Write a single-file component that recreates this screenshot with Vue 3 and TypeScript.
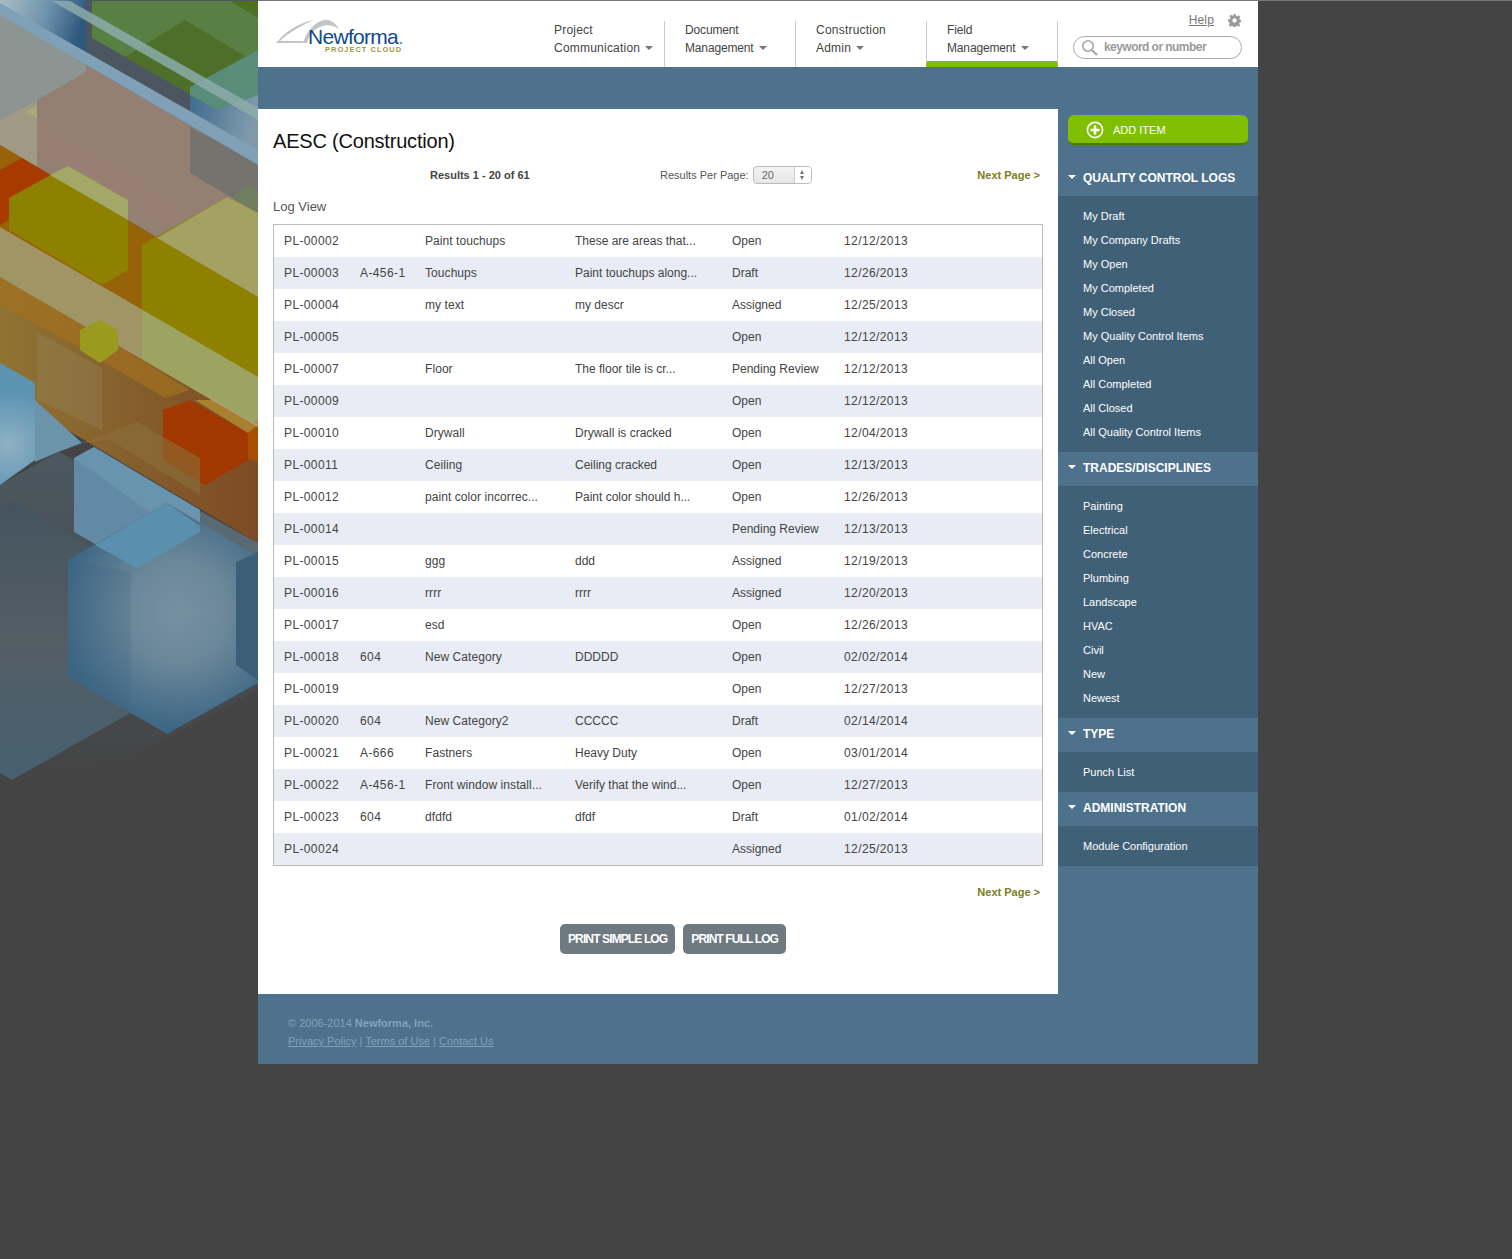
<template>
  <div class="page">
    <aside class="art">
      <svg width="258" height="800" viewBox="0 0 258 800">
        <defs>
          <linearGradient id="gBlueTop" x1="0" y1="0" x2="1" y2="0.2">
            <stop offset="0" stop-color="#a9bcc6" />
            <stop offset="0.55" stop-color="#6f94ad" />
            <stop offset="1" stop-color="#2f5a7e" />
          </linearGradient>
          <linearGradient id="gBlueRight" x1="0" y1="0" x2="1" y2="0.4">
            <stop offset="0" stop-color="#356488" />
            <stop offset="1" stop-color="#7f99ab" />
          </linearGradient>
          <linearGradient id="gDark" x1="0" y1="0" x2="0" y2="1">
            <stop offset="0" stop-color="#4b5860" />
            <stop offset="1" stop-color="#444444" />
          </linearGradient>
          <linearGradient id="gDarkHex" x1="0" y1="0" x2="0" y2="1">
            <stop offset="0" stop-color="#44545e" />
            <stop offset="0.5" stop-color="#535e65" />
            <stop offset="1" stop-color="#466070" />
          </linearGradient>
          <linearGradient id="gWarm" x1="0" y1="0" x2="1" y2="0">
            <stop offset="0" stop-color="#8f7433" />
            <stop offset="1" stop-color="#7d4a25" />
          </linearGradient>
          <radialGradient id="gCube" gradientUnits="userSpaceOnUse" cx="178" cy="612" r="118">
            <stop offset="0" stop-color="#76909f" />
            <stop offset="0.45" stop-color="#6a8799" />
            <stop offset="1" stop-color="#3c6684" />
          </radialGradient>
          <radialGradient id="gCorner" gradientUnits="userSpaceOnUse" cx="8" cy="445" r="55">
            <stop offset="0" stop-color="#8fb0c2" />
            <stop offset="1" stop-color="#5b93b3" />
          </radialGradient>
        </defs>

        <!-- top -->
        <polygon points="0,0 258,0 258,190 0,40" fill="#4b5661" />
        <polygon points="0,0 86,0 86,56 0,6" fill="url(#gBlueTop)" />
        <polygon points="92,1 258,1 258,50 218,110 92,38" fill="#5a7f45" />
        <polygon points="125,57 185,20 243,55 258,62 258,70 218,110" fill="#4d6f2a" />
        <polygon points="230,1 258,1 258,18" fill="#4e7025" />

        <!-- pink band -->
        <polygon points="0,15 258,165 258,297 0,145" fill="#948073" />
        <polygon points="0,13 86,65 86,72 37,100 0,120" fill="#8c9592" />
        <polygon points="0,120 37,100 37,167 0,145" fill="#a09a85" />
        <polygon points="25,112 37,105 37,118" fill="#a3ab7a" />
        <polygon points="37,120 190,210 170,225 37,150" fill="#9a7f74" opacity="0.6" />
        <polygon points="190,93 258,55 258,160 190,125" fill="url(#gBlueRight)" />
        <polygon points="190,127 258,163 258,213 190,173" fill="#75736e" />
        <polygon points="233,197 248,185 258,190 258,213" fill="#6f7f60" />
        <polygon points="190,87 258,50 258,95 218,110 190,95" fill="#5a8c7a" />
        <polygon points="0,3 0,15 258,165 258,150" fill="#7fa0b6" />
        <polygon points="52,1 70,1 258,108 258,120" fill="#8cabaa" opacity="0.85" />

        <!-- orange band -->
        <polygon points="0,145 258,297 258,440 0,290" fill="#96620a" />
        <polygon points="0,170 22,158 50,175 9,198 9,220 0,225" fill="#a83a00" />
        <polygon points="9,198 68,166 128,200 128,270 102,285 9,230" fill="#8e8000" />
        <polygon points="50,175 68,166 128,200 128,220" fill="#a3a868" />
        <polygon points="142,245 227,197 258,213 258,425 142,365" fill="#8e8000" />
        <polygon points="157,238 227,197 258,213 258,297" fill="#a3a262" />

        <!-- warm band below the stripe -->
        <polygon points="0,277 258,427 258,543 0,390" fill="url(#gWarm)" />
        <polygon points="0,277 102,336 190,390 165,398 75,345 0,305" fill="#a3701f" opacity="0.7" />
        <polygon points="37,332 102,368 102,430 37,400" fill="#94825a" opacity="0.4" />
        <polygon points="163,410 190,400 248,433 248,460 205,485 163,460" fill="#a03800" />
        <polygon points="248,425 258,420 258,462 248,458" fill="#a85000" />
        <polygon points="195,400 215,400 258,425 248,433" fill="#a88030" />
        <polygon points="82,443 137,422 200,458 200,495 110,440" fill="#8a7038" opacity="0.6" />

        <!-- light stripe -->
        <polygon points="0,227 258,377 258,427 0,277" fill="#a9c0b0" opacity="0.55" />
        <polygon points="80,330 100,320 118,330 118,350 100,363 80,350" fill="#9a9a20" />

        <!-- lower dark part -->
        <polygon points="0,485 58,452 258,543 258,690 130,760 0,780" fill="url(#gDark)" />
        <polygon points="200,511 258,543 258,557 200,525" fill="#5a6a72" />
        <polygon points="0,506 14,502 130,570 130,713 12,780 0,773" fill="url(#gDarkHex)" />
        <polygon points="0,363 35,383 35,460 0,485" fill="url(#gCorner)" />
        <polygon points="35,400 82,443 58,452 35,462" fill="#6b93aa" />
        <polygon points="74,458 94,447 200,510 200,532 137,568 74,532" fill="#6289a5" />
        <polygon points="74,458 94,447 200,510 200,530 186,538" fill="#6b98b2" opacity="0.7" />
        <polygon points="167,503 258,557 258,683 167,734 68,677 68,560" fill="url(#gCube)" />
        <polygon points="68,560 131,572 131,713 68,677" fill="#3c6684" opacity="0.2" />
        <polygon points="95,545 167,503 200,526 200,532 137,568" fill="#5b8fae" />
        <polygon points="236,562 258,552 258,680 236,665" fill="#3c5f78" />
      </svg>
    </aside>

    <div class="shell">
      <header class="topbar">
        <div class="logo">
          <svg class="arch" width="70" height="26" viewBox="0 0 70 26">
            <path d="M0 24 C10 12 22 4 38 1 C26 6 12 14 4 22 H27 V24 Z" fill="#c3c5c5" />
            <path d="M27 24 C30 14 38 3 48 1 C55 0 60 5 63 10 C57 6 50 5 44 8 C37 11 33 17 31 24 Z" fill="#c3c5c5" />
          </svg>
          <div class="logo-name">Newforma<i>.</i></div>
          <div class="logo-sub">PROJECT CLOUD</div>
        </div>
        <nav class="nav">
          <a v-for="item in navItems" :key="item.line1" :class="['nav-item', { active: item.active }]">
            {{ item.line1 }}<br />{{ item.line2 }}<span class="caret"></span>
          </a>
        </nav>
        <div class="tools">
          <div class="tools-top">
            <a class="help">Help</a>
            <svg width="13" height="13" viewBox="0 0 24 24">
              <path fill="#9b9b9b" fill-rule="evenodd" d="M10 0h4l.7 3.4 2.3 1 2.9-1.9 2.8 2.8-1.9 2.9 1 2.3 3.2.5v4l-3.4.7-1 2.3 1.9 2.9-2.8 2.8-2.9-1.9-2.3 1-.5 3.2h-4l-.7-3.4-2.3-1-2.9 1.9-2.8-2.8 1.9-2.9-1-2.3L0 14v-4l3.4-.7 1-2.3-1.9-2.9 2.8-2.8 2.9 1.9 2.3-1zM12 8a4 4 0 1 0 0 8 4 4 0 0 0 0-8z" />
            </svg>
          </div>
          <div class="search">
            <svg width="17" height="17" viewBox="0 0 17 17">
              <circle cx="7" cy="7" r="5.2" fill="none" stroke="#a5a5a5" stroke-width="1.6" />
              <path d="M11 11l5 5" stroke="#a5a5a5" stroke-width="2.2" />
            </svg>
            <span>keyword or number</span>
          </div>
        </div>
      </header>
      <div class="band"></div>

      <div class="body">
        <main class="main">
          <h1>AESC (Construction)</h1>
          <div class="results">
            <b class="count">Results 1 - 20 of 61</b>
            <span class="per-page">Results Per Page:</span>
            <div class="select">
              <span>20</span>
              <i class="arrows"></i>
            </div>
            <a class="next">Next Page &gt;</a>
          </div>
          <div class="log-view">Log View</div>
          <table class="log">
            <tbody>
              <tr v-for="row in rows" :key="row[0]">
                <td v-for="(cell, i) in row" :key="i">{{ cell }}</td>
                <td></td>
              </tr>
            </tbody>
          </table>
          <div class="next-row"><a class="next">Next Page &gt;</a></div>
          <div class="print">
            <button type="button">PRINT SIMPLE LOG</button>
            <button type="button">PRINT FULL LOG</button>
          </div>
        </main>

        <aside class="side">
          <div class="add-wrap">
            <a class="add">
              <svg width="18" height="18" viewBox="0 0 18 18">
                <circle cx="9" cy="9" r="7.6" fill="none" stroke="#fff" stroke-width="1.6" />
                <path d="M9 4.5v9M4.5 9h9" stroke="#fff" stroke-width="2.6" />
              </svg>
              ADD ITEM
            </a>
          </div>
          <section v-for="(group, idx) in groups" :key="group.title">
            <h3 :class="{ first: idx === 0 }"><span class="tri"></span>{{ group.title }}</h3>
            <ul>
              <li v-for="link in group.links" :key="link">{{ link }}</li>
            </ul>
          </section>
        </aside>
      </div>

      <footer class="footer">
        <div>© 2006-2014 <b>Newforma, Inc.</b></div>
        <div class="links"><a>Privacy Policy</a> | <a>Terms of Use</a> | <a>Contact Us</a></div>
      </footer>
    </div>
  </div>
</template>

<script setup lang="ts">
const navItems = [
  { line1: 'Project', line2: 'Communication', active: false },
  { line1: 'Document', line2: 'Management', active: false },
  { line1: 'Construction', line2: 'Admin', active: false },
  { line1: 'Field', line2: 'Management', active: true }
]

const rows: string[][] = [
  ['PL-00002', '', 'Paint touchups', 'These are areas that...', 'Open', '12/12/2013'],
  ['PL-00003', 'A-456-1', 'Touchups', 'Paint touchups along...', 'Draft', '12/26/2013'],
  ['PL-00004', '', 'my text', 'my descr', 'Assigned', '12/25/2013'],
  ['PL-00005', '', '', '', 'Open', '12/12/2013'],
  ['PL-00007', '', 'Floor', 'The floor tile is cr...', 'Pending Review', '12/12/2013'],
  ['PL-00009', '', '', '', 'Open', '12/12/2013'],
  ['PL-00010', '', 'Drywall', 'Drywall is cracked', 'Open', '12/04/2013'],
  ['PL-00011', '', 'Ceiling', 'Ceiling cracked', 'Open', '12/13/2013'],
  ['PL-00012', '', 'paint color incorrec...', 'Paint color should h...', 'Open', '12/26/2013'],
  ['PL-00014', '', '', '', 'Pending Review', '12/13/2013'],
  ['PL-00015', '', 'ggg', 'ddd', 'Assigned', '12/19/2013'],
  ['PL-00016', '', 'rrrr', 'rrrr', 'Assigned', '12/20/2013'],
  ['PL-00017', '', 'esd', '', 'Open', '12/26/2013'],
  ['PL-00018', '604', 'New Category', 'DDDDD', 'Open', '02/02/2014'],
  ['PL-00019', '', '', '', 'Open', '12/27/2013'],
  ['PL-00020', '604', 'New Category2', 'CCCCC', 'Draft', '02/14/2014'],
  ['PL-00021', 'A-666', 'Fastners', 'Heavy Duty', 'Open', '03/01/2014'],
  ['PL-00022', 'A-456-1', 'Front window install...', 'Verify that the wind...', 'Open', '12/27/2013'],
  ['PL-00023', '604', 'dfdfd', 'dfdf', 'Draft', '01/02/2014'],
  ['PL-00024', '', '', '', 'Assigned', '12/25/2013']
]

const groups = [
  {
    title: 'QUALITY CONTROL LOGS',
    links: ['My Draft', 'My Company Drafts', 'My Open', 'My Completed', 'My Closed', 'My Quality Control Items', 'All Open', 'All Completed', 'All Closed', 'All Quality Control Items']
  },
  {
    title: 'TRADES/DISCIPLINES',
    links: ['Painting', 'Electrical', 'Concrete', 'Plumbing', 'Landscape', 'HVAC', 'Civil', 'New', 'Newest']
  },
  { title: 'TYPE', links: ['Punch List'] },
  { title: 'ADMINISTRATION', links: ['Module Configuration'] }
]
</script>

<style>
html, body {
  background: #444444;
}
</style>

<style scoped>
.page {
  display: flex;
  min-height: 1259px;
  border-top: 1px solid #777;
  box-sizing: border-box;
  font-family: "Liberation Sans", Arial, sans-serif;
  font-size: 12px;
  color: #444;
}
.art {
  width: 258px;
  flex: none;
  line-height: 0;
  margin-top: -1px;
}
.shell {
  width: 1000px;
  flex: none;
}
.topbar {
  display: flex;
  height: 66px;
  background: #fff;
}
.logo {
  width: 276px;
  flex: none;
  padding: 18px 0 0 18px;
  box-sizing: border-box;
  position: relative;
}
.arch {
  display: block;
}
.logo-name {
  position: absolute;
  left: 50px;
  top: 24px;
  font-size: 21px;
  line-height: 24px;
  letter-spacing: -0.7px;
  color: #0f4a8a;
}
.logo-name i {
  font-style: normal;
  color: #4f9bc4;
}
.logo-sub {
  position: absolute;
  left: 67px;
  top: 44px;
  font-size: 7.5px;
  line-height: 9px;
  font-weight: bold;
  letter-spacing: 1px;
  color: #9a9a3d;
}
.nav {
  display: flex;
  padding-top: 20px;
}
.nav-item {
  width: 131px;
  box-sizing: border-box;
  padding: 0 0 0 20px;
  border-right: 1px solid #ccc;
  line-height: 18px;
  white-space: nowrap;
  color: #444;
}
.nav-item:nth-child(odd) {
  letter-spacing: 0.22px;
}
.nav-item:nth-child(even) {
  letter-spacing: -0.15px;
}
.nav-item.active {
  border-left: 1px solid #ccc;
  margin-left: -1px;
  width: 132px;
  border-bottom: 6px solid #7fbf00;
}
.caret {
  display: inline-block;
  margin-left: 5px;
  vertical-align: 2px;
  border-style: solid;
  border-width: 4px 4px 0;
  border-color: #777 transparent transparent;
}
.tools {
  flex: 1;
  padding: 11px 16px 0 15px;
}
.tools-top {
  display: flex;
  justify-content: flex-end;
  align-items: center;
  gap: 14px;
  height: 16px;
  padding-right: 1px;
}
.help {
  color: #777;
  text-decoration: underline;
  letter-spacing: 0.15px;
}
.search {
  display: flex;
  align-items: center;
  gap: 6px;
  height: 23px;
  margin-top: 8px;
  padding-left: 7px;
  box-sizing: border-box;
  border: 1px solid #aaa;
  border-radius: 12px;
  color: #9a9a9a;
  font-weight: bold;
  letter-spacing: -0.55px;
}
.search span {
  margin-top: -2px;
}
.band {
  height: 42px;
  background: #4f728c;
}
.body {
  display: flex;
  height: 885px;
}
.main {
  width: 800px;
  flex: none;
  background: #fff;
  padding: 0 15px;
  box-sizing: border-box;
}
h1 {
  margin: 0;
  padding-top: 20px;
  font-size: 20px;
  line-height: 24px;
  font-weight: normal;
  letter-spacing: -0.2px;
  color: #111;
}
.results {
  display: flex;
  align-items: center;
  height: 18px;
  margin-top: 13px;
  font-size: 11px;
}
.count {
  margin-left: 157px;
  width: 230px;
  color: #444;
}
.per-page {
  color: #555;
}
.select {
  display: flex;
  align-items: center;
  justify-content: space-between;
  width: 59px;
  height: 18px;
  margin-left: 4px;
  box-sizing: border-box;
  padding-left: 8px;
  border: 1px solid #bbb;
  border-radius: 4px;
  background: linear-gradient(#f4f4f4, #e6e6e6);
  color: #666;
}
.arrows {
  position: relative;
  width: 16px;
  height: 16px;
  border-left: 1px solid #ccc;
  background: #fff;
  border-radius: 0 3px 3px 0;
}
.arrows::before,
.arrows::after {
  content: "";
  position: absolute;
  left: 5px;
  border-style: solid;
  border-color: #777 transparent;
}
.arrows::before {
  top: 3px;
  border-width: 0 2.5px 4px;
}
.arrows::after {
  top: 9px;
  border-width: 4px 2.5px 0;
}
.next {
  margin-left: auto;
  margin-right: 3px;
  font-size: 11px;
  font-weight: bold;
  color: #7d7d20;
}
.log-view {
  margin-top: 15px;
  font-size: 13px;
  line-height: 16px;
  color: #555;
}
.log {
  width: 770px;
  margin-top: 9px;
  border-collapse: collapse;
  border: 1px solid #bbb;
  table-layout: fixed;
}
.log td {
  height: 32px;
  padding: 0 0 0 10px;
  white-space: nowrap;
  color: #444;
}
.log td:nth-child(1) { width: 66px; letter-spacing: 0.38px; }
.log td:nth-child(2) { width: 55px; letter-spacing: 0.4px; }
.log td:nth-child(3) { width: 140px; letter-spacing: 0.07px; }
.log td:nth-child(4) { width: 147px; }
.log td:nth-child(5) { width: 102px; }
.log td:nth-child(6) { width: 80px; letter-spacing: 0.4px; }
.log tr:nth-child(even) td {
  background: #e9ecf5;
}
.next-row {
  display: flex;
  margin-top: 19px;
  height: 14px;
  line-height: 14px;
}
.print {
  display: flex;
  gap: 8px;
  margin-top: 25px;
  padding-left: 287px;
}
.print button {
  height: 30px;
  padding: 0 8px;
  border: none;
  border-radius: 5px;
  background: #6e7a80;
  color: #fff;
  font-family: inherit;
  font-size: 12px;
  font-weight: bold;
  letter-spacing: -0.88px;
}
.side {
  flex: 1;
  background: #4f728c;
  align-self: stretch;
}
.add-wrap {
  padding: 6px 10px 0;
}
.add {
  display: flex;
  align-items: center;
  gap: 9px;
  height: 30px;
  padding: 2px 0 0 18px;
  box-sizing: border-box;
  border-radius: 6px;
  border-bottom: 2px solid #4b7a00;
  background: #7fbf00;
  color: #fff;
  font-size: 11px;
}
.side h3 {
  display: flex;
  align-items: center;
  height: 34px;
  margin: 0;
  padding: 0 0 3px 10px;
  box-sizing: border-box;
  font-size: 12px;
  color: #fff;
}
.side h3.first {
  margin-top: 15px;
  height: 36px;
  padding-bottom: 1px;
}
.tri {
  margin-right: 7px;
  margin-bottom: 2px;
  border-style: solid;
  border-width: 4px 4px 0;
  border-color: #fff transparent transparent;
}
.side ul {
  margin: 0;
  padding: 8px 0;
  list-style: none;
  background: #3f6077;
}
.side li {
  height: 24px;
  padding-left: 25px;
  line-height: 24px;
  font-size: 11px;
  color: #fff;
}
.footer {
  height: 70px;
  padding: 20px 0 0 30px;
  box-sizing: border-box;
  background: #4f728c;
  font-size: 11px;
  line-height: 18px;
  color: #7fa3bb;
}
.links a {
  text-decoration: underline;
}
</style>
